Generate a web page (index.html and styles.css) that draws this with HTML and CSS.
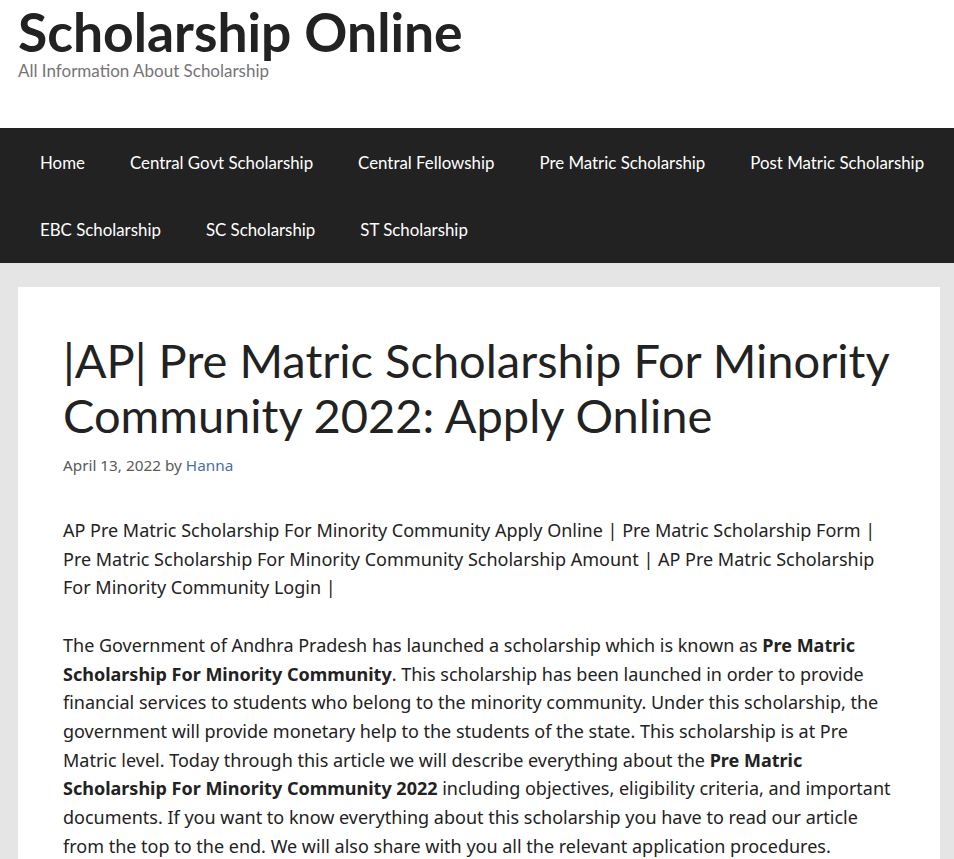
FILE: index.html
```html
<!DOCTYPE html>
<html lang="en">
<head>
	<meta charset="utf-8">
	<title>|AP| Pre Matric Scholarship For Minority Community 2022: Apply Online</title>
	<link rel="stylesheet" href="styles.css">
</head>
<body>
	<header class="site-header">
		<div class="site-branding">
			<p class="site-title"><a href="#">Scholarship Online</a></p>
			<p class="site-description">All Information About Scholarship</p>
		</div>
	</header>

	<nav class="main-nav">
		<ul class="menu">
			<li><a href="#">Home</a></li>
			<li><a href="#">Central Govt Scholarship</a></li>
			<li><a href="#">Central Fellowship</a></li>
			<li><a href="#">Pre Matric Scholarship</a></li>
			<li><a href="#">Post Matric Scholarship</a></li>
			<li><a href="#">EBC Scholarship</a></li>
			<li><a href="#">SC Scholarship</a></li>
			<li><a href="#">ST Scholarship</a></li>
		</ul>
	</nav>

	<div class="site-content">
		<article class="post">
			<header class="entry-header">
				<h1 class="entry-title">|AP| Pre Matric Scholarship For Minority Community 2022: Apply Online</h1>
				<div class="entry-meta">
					<span class="posted-on">April 13, 2022</span> by <a class="author" href="#">Hanna</a>
				</div>
			</header>

			<div class="entry-content">
				<p>AP Pre Matric Scholarship For Minority Community Apply Online | Pre Matric Scholarship Form | Pre Matric Scholarship For Minority Community Scholarship Amount | AP Pre Matric Scholarship For Minority Community Login |</p>
				<p>The Government of Andhra Pradesh has launched a scholarship which is known as <strong>Pre Matric Scholarship For Minority Community</strong>. This scholarship has been launched in order to provide financial services to students who belong to the minority community. Under this scholarship, the government will provide monetary help to the students of the state. This scholarship is at Pre Matric level. Today through this article we will describe everything about the <strong>Pre Matric Scholarship For Minority Community 2022</strong> including objectives, eligibility criteria, and important documents. If you want to know everything about this scholarship you have to read our article from the top to the end. We will also share with you all the relevant application procedures.</p>
			</div>
		</article>
	</div>
</body>
</html>
```

FILE: styles.css
```css
html {
	height: 100%;
}

body {
	margin: 0;
	padding: 0;
	background: #e5e5e5;
	color: #222222;
	font-family: Lato, sans-serif;
	font-size: 17px;
	line-height: 1.5;
	overflow: hidden;
}

a {
	text-decoration: none;
}

/* header */

.site-header {
	background: #ffffff;
	height: 128px;
}

.site-branding {
	padding: 0 18px;
}

.site-title {
	margin: 0;
	font-weight: bold;
	font-size: 53.4px;
	line-height: 62px;
}

.site-title a {
	color: #222222;
}

.site-description {
	margin: 0;
	font-size: 17px;
	line-height: 18px;
	color: #757575;
}

/* navigation */

.main-nav {
	background: #222222;
}

.menu {
	list-style: none;
	margin: 0;
	padding: 2px 0 0 17.5px;
	display: flex;
	flex-wrap: wrap;
	width: 936px;
}

.menu a {
	display: block;
	padding: 0 22.5px;
	line-height: 66.5px;
	font-size: 16.85px;
	color: #ffffff;
}

/* content */

.site-content {
	padding: 24px 14px 0 18px;
}

.post {
	background: #ffffff;
	padding: 46px 45px 20px;
}

.entry-title {
	margin: 0;
	font-weight: normal;
	font-size: 47px;
	line-height: 55px;
	color: #222222;
}

.entry-meta {
	margin-top: 10px;
	font-family: "Noto Sans", sans-serif;
	font-size: 15.3px;
	line-height: 25px;
	color: #595959;
}

.entry-meta .author {
	color: #4a6fa0;
}

.entry-content {
	margin-top: 38px;
	font-family: "Noto Sans", sans-serif;
	font-size: 18px;
	line-height: 28.7px;
}

.entry-content p {
	margin: 0 0 28.7px;
}

.entry-content strong {
	font-weight: bold;
}
```
